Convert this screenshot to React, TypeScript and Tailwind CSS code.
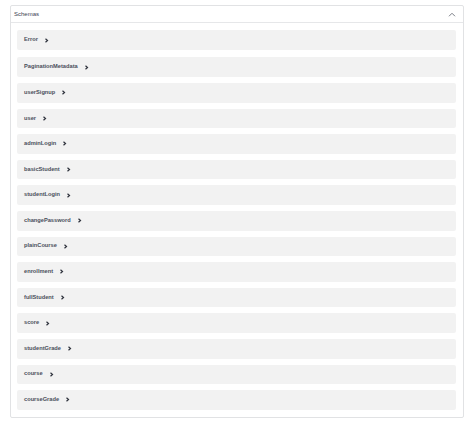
import React from "react";

const schemas = [
  "Error",
  "PaginationMetadata",
  "userSignup",
  "user",
  "adminLogin",
  "basicStudent",
  "studentLogin",
  "changePassword",
  "plainCourse",
  "enrollment",
  "fullStudent",
  "score",
  "studentGrade",
  "course",
  "courseGrade",
];

function ChevronRight() {
  return (
    <svg width="5" height="5" viewBox="0 0 10 10" className="ml-[6px] shrink-0">
      <path d="M3 1.5 L7 5 L3 8.5" fill="none" stroke="#2f333d" strokeWidth="2.4" />
    </svg>
  );
}

function ChevronUp() {
  return (
    <svg width="8" height="5" viewBox="0 0 16 10">
      <path d="M2 8.5 L8 2.5 L14 8.5" fill="none" stroke="#6b6f78" strokeWidth="1.8" />
    </svg>
  );
}

export default function App() {
  return (
    <div
      className="w-[474px] h-[425px] bg-white pt-[5px] px-[10px]"
      style={{ fontFamily: '"Liberation Sans", Arial, sans-serif' }}
    >
      <section className="border border-[#e1e2e4] rounded-[2px]">
        <div className="h-[17px] flex items-center justify-between pl-[3px] pr-[7px] border-b border-[#e6e7e9]">
          <span className="text-[6px] text-[#3b4151]">Schemas</span>
          <ChevronUp />
        </div>
        <div className="flex flex-col gap-[6px] pt-[7.4px] pb-[7px] pl-[6px] pr-[7px]">
          {schemas.map((name, i) => (
            <div
              key={name}
              className={`h-[19.6px] bg-[#f2f2f2] rounded-[2px] flex items-center pl-[7px] ${
                i === 0 ? "mb-[1.4px]" : ""
              }`}
            >
              <span className="text-[5.7px] font-bold text-[#4a4f5b] leading-none">{name}</span>
              <ChevronRight />
            </div>
          ))}
        </div>
      </section>
    </div>
  );
}
